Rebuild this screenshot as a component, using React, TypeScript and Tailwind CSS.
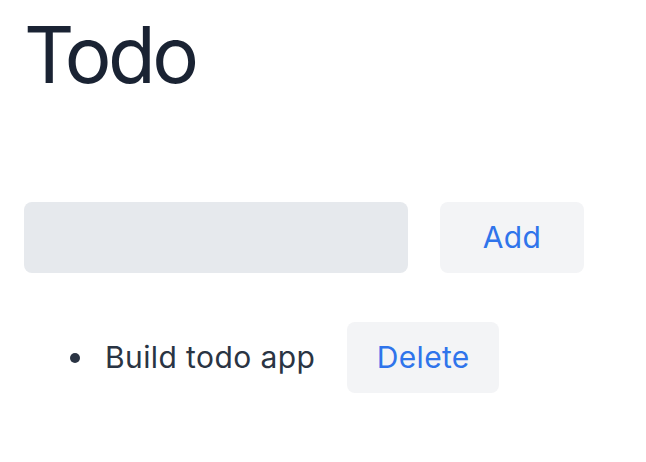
import { useState } from "react";

export default function App() {
  const [todos, setTodos] = useState<string[]>(["Build todo app"]);
  const [text, setText] = useState("");

  const add = () => {
    if (!text.trim()) return;
    setTodos([...todos, text.trim()]);
    setText("");
  };

  return (
    <div className="min-h-screen bg-white px-6 font-['Inter',sans-serif] text-[#1f2937]">
      <h1 className="pt-[10px] text-[78px] leading-[90px] tracking-[-3.5px] text-[#1a2333]">Todo</h1>

      <div className="mt-[102px] flex gap-8">
        <input
          value={text}
          onChange={(e) => setText(e.target.value)}
          className="h-[71px] w-[384px] rounded-lg bg-[#e6e9ed] px-4 text-[30px] outline-none"
        />
        <button
          onClick={add}
          className="h-[71px] w-[144px] rounded-lg bg-[#f3f4f6] text-[30px] tracking-[0.3px] text-[#2f74eb]"
        >
          Add
        </button>
      </div>

      <ul className="mt-[49px] pl-[46px] text-[30px] text-[#2a3443]">
        {todos.map((t, i) => (
          <li key={i} className="mb-4 flex items-center">
            <span className="mr-[25px] h-[10px] w-[10px] rounded-full bg-[#2a3443]" />
            <span className="tracking-[0.4px]">{t}</span>
            <button
              onClick={() => setTodos(todos.filter((_, j) => j !== i))}
              className="ml-8 h-[71px] w-[152px] rounded-lg bg-[#f3f4f6] text-[30px] tracking-[0.3px] text-[#2f74eb]"
            >
              Delete
            </button>
          </li>
        ))}
      </ul>
    </div>
  );
}
